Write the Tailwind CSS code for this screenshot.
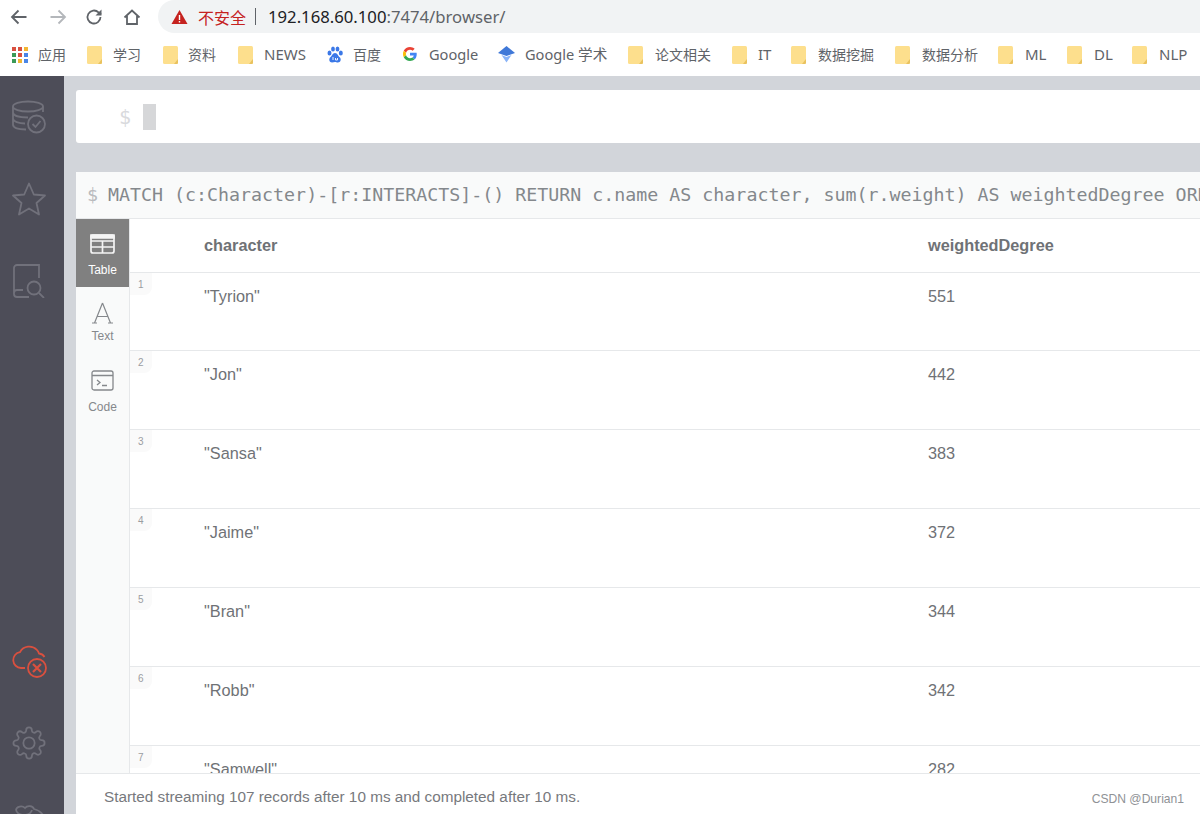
<!DOCTYPE html>
<html>
<head>
  <meta charset="utf-8" />
  <title>Neo4j Browser</title>
  <script src="https://cdn.jsdelivr.net/npm/@tailwindcss/browser@4"></script>
</head>
<body class="relative h-[814px] w-[1200px] overflow-hidden bg-white font-['Liberation_Sans',sans-serif]">

  <!-- browser toolbar -->
  <header class="flex h-[33px] items-center bg-white">
    <div class="flex w-[158px] items-center pl-[10px]">
      <svg class="h-[18px] w-[18px] text-[#5f6368]" viewBox="0 0 18 18" fill="none" stroke="currentColor" stroke-width="1.8"><path d="M16.5 9H2M8.5 2.5 2 9l6.500 6.500"/></svg>
      <svg class="ml-[21px] h-[18px] w-[18px] text-[#b4b7bb]" viewBox="0 0 18 18" fill="none" stroke="currentColor" stroke-width="1.8"><path d="M1.500 9H16M9.500 2.500 16 9l-6.500 6.500"/></svg>
      <svg class="ml-[18px] h-[18px] w-[18px] text-[#5f6368]" viewBox="0 0 18 18" fill="none" stroke="currentColor" stroke-width="1.8"><path d="M15.500 9a6.500 6.500 0 1 1-2-4.700L16 6.500"/><path d="M16.500 1.500v6h-6" fill="currentColor" stroke="none"/></svg>
      <svg class="ml-[20px] h-[18px] w-[18px] text-[#5f6368]" viewBox="0 0 18 18" fill="none" stroke="currentColor" stroke-width="1.8"><path d="M1.500 9.500 9 2.500l7.500 7M4 8v8h10V8"/></svg>
    </div>
    <div class="flex h-[33px] flex-1 items-center rounded-l-full bg-[#f1f3f4] pl-[13px]">
      <svg class="h-[16px] w-[17px]" viewBox="0 0 17 16"><path d="M8.500 1 16.500 15H.5z" fill="#c5221f"/><path d="M7.800 6h1.400v5H7.800zM7.800 12h1.400v1.500H7.800z" fill="#fff"/></svg>
      <span class="ml-[10px] font-['Noto_Sans_CJK_SC',sans-serif] text-[16px] text-[#c5221f]">不安全</span>
      <span class="ml-[9px] h-[17px] w-px bg-[#5f6368]"></span>
      <span class="ml-[12px] font-['Noto_Sans',sans-serif] text-[16.700px] text-[#202124]">192.168.60.100<span class="text-[#5f6368]">:7474/browser/</span></span>
    </div>
  </header>

  <!-- bookmarks bar -->
  <nav class="flex h-[43px] items-center bg-white pl-[12px] font-['Noto_Sans','Noto_Sans_CJK_SC',sans-serif] text-[14px] text-[#5f6368]">
    <div class="flex w-[75px] shrink-0 items-center gap-[10px]">
      <svg class="h-4 w-4" viewBox="0 0 16 16">
        <rect x="0" y="0" width="4" height="4" fill="#d9503f"/><rect x="6" y="0" width="4" height="4" fill="#d9503f"/><rect x="12" y="0" width="4" height="4" fill="#f2b632"/>
        <rect x="0" y="6" width="4" height="4" fill="#3b9a57"/><rect x="6" y="6" width="4" height="4" fill="#d9503f"/><rect x="12" y="6" width="4" height="4" fill="#4a86e8"/>
        <rect x="0" y="12" width="4" height="4" fill="#3b9a57"/><rect x="6" y="12" width="4" height="4" fill="#f2b632"/><rect x="12" y="12" width="4" height="4" fill="#4a86e8"/>
      </svg>
      <span>应用</span>
    </div>
    <div class="flex w-[76px] shrink-0 items-center gap-[11px]">
      <svg class="h-[18px] w-[15px]" viewBox="0 0 15 18"><rect width="15" height="18" rx="1.500" fill="#fddf8d"/><path d="M15 13v3.500a1.500 1.500 0 0 1-1.500 1.500H11z" fill="#e9c25e"/></svg>
      <span>学习</span>
    </div>
    <div class="flex w-[75px] shrink-0 items-center gap-[10px]">
      <svg class="h-[18px] w-[15px]" viewBox="0 0 15 18"><rect width="15" height="18" rx="1.500" fill="#fddf8d"/><path d="M15 13v3.500a1.500 1.500 0 0 1-1.500 1.500H11z" fill="#e9c25e"/></svg>
      <span>资料</span>
    </div>
    <div class="flex w-[89px] shrink-0 items-center gap-[11px]">
      <svg class="h-[18px] w-[15px]" viewBox="0 0 15 18"><rect width="15" height="18" rx="1.500" fill="#fddf8d"/><path d="M15 13v3.500a1.500 1.500 0 0 1-1.500 1.500H11z" fill="#e9c25e"/></svg>
      <span class="text-[15px]">NEWS</span>
    </div>
    <div class="flex w-[76px] shrink-0 items-center gap-[10px]">
      <svg class="h-[17px] w-4" viewBox="0 0 16 17" fill="#3b78e7"><ellipse cx="2.500" cy="7" rx="2" ry="2.600"/><ellipse cx="6" cy="3" rx="1.900" ry="2.600"/><ellipse cx="10.500" cy="3" rx="1.900" ry="2.600"/><ellipse cx="13.800" cy="7" rx="2" ry="2.600"/><path d="M8 7c2.500 0 3 3 5 4.500 1.500 2 .5 5-2 5-1.500 0-2-.5-3-.5s-2 .5-3 .5c-2.500 0-3.500-3-2-5C5 10 5.500 7 8 7z"/><path d="M6 11v3M8.500 12v2h2v-2" fill="none" stroke="#fff" stroke-width=".9"/></svg>
      <span>百度</span>
    </div>
    <div class="flex w-[95px] shrink-0 items-center gap-[12px]">
      <svg class="h-[14px] w-[14px]" viewBox="0 0 48 48"><path fill="#ea4335" d="M24 9.500c3.500 0 6.700 1.300 9.200 3.400l6.800-6.800C35.800 2.400 30.300 0 24 0 14.600 0 6.500 5.400 2.600 13.200l8 6.200C12.400 13.600 17.700 9.500 24 9.500z"/><path fill="#4285f4" d="M47 24.500c0-1.600-.2-3.200-.5-4.500H24v9h12.900c-.6 3-2.200 5.400-4.700 7.100l7.700 6C44.400 38 47 31.800 47 24.500z"/><path fill="#fbbc05" d="M10.600 28.600c-.5-1.400-.7-3-.7-4.600s.3-3.200.7-4.600l-8-6.200C.9 16.500 0 20.100 0 24s.9 7.500 2.600 10.800z"/><path fill="#34a853" d="M24 48c6.500 0 11.900-2.100 15.900-5.800l-7.700-6c-2.200 1.500-4.900 2.300-8.200 2.300-6.300 0-11.600-4.100-13.400-9.900l-8 6.200C6.500 42.600 14.600 48 24 48z"/></svg>
      <span class="text-[14.600px]">Google</span>
    </div>
    <div class="flex w-[130px] shrink-0 items-center gap-[10px]">
      <svg class="h-[17px] w-[17px]" viewBox="0 0 17 17"><path d="M8.500 0 17 7 8.500 10 0 7z" fill="#3f78d8"/><path d="M3.500 9 8.500 11 13.500 9 8.500 16.500z" fill="#8ab4f8"/></svg>
      <span class="text-[14.600px]">Google 学术</span>
    </div>
    <div class="flex w-[104px] shrink-0 items-center gap-[12px]">
      <svg class="h-[18px] w-[15px]" viewBox="0 0 15 18"><rect width="15" height="18" rx="1.500" fill="#fddf8d"/><path d="M15 13v3.500a1.500 1.500 0 0 1-1.500 1.500H11z" fill="#e9c25e"/></svg>
      <span>论文相关</span>
    </div>
    <div class="flex w-[59px] shrink-0 items-center gap-[11px]">
      <svg class="h-[18px] w-[15px]" viewBox="0 0 15 18"><rect width="15" height="18" rx="1.500" fill="#fddf8d"/><path d="M15 13v3.500a1.500 1.500 0 0 1-1.500 1.500H11z" fill="#e9c25e"/></svg>
      <span class="text-[15px]">IT</span>
    </div>
    <div class="flex w-[104px] shrink-0 items-center gap-[12px]">
      <svg class="h-[18px] w-[15px]" viewBox="0 0 15 18"><rect width="15" height="18" rx="1.500" fill="#fddf8d"/><path d="M15 13v3.500a1.500 1.500 0 0 1-1.500 1.500H11z" fill="#e9c25e"/></svg>
      <span>数据挖掘</span>
    </div>
    <div class="flex w-[103px] shrink-0 items-center gap-[12px]">
      <svg class="h-[18px] w-[15px]" viewBox="0 0 15 18"><rect width="15" height="18" rx="1.500" fill="#fddf8d"/><path d="M15 13v3.500a1.500 1.500 0 0 1-1.500 1.500H11z" fill="#e9c25e"/></svg>
      <span>数据分析</span>
    </div>
    <div class="flex w-[69px] shrink-0 items-center gap-[12px]">
      <svg class="h-[18px] w-[15px]" viewBox="0 0 15 18"><rect width="15" height="18" rx="1.500" fill="#fddf8d"/><path d="M15 13v3.500a1.500 1.500 0 0 1-1.500 1.500H11z" fill="#e9c25e"/></svg>
      <span class="text-[15px]">ML</span>
    </div>
    <div class="flex w-[65px] shrink-0 items-center gap-[12px]">
      <svg class="h-[18px] w-[15px]" viewBox="0 0 15 18"><rect width="15" height="18" rx="1.500" fill="#fddf8d"/><path d="M15 13v3.500a1.500 1.500 0 0 1-1.500 1.500H11z" fill="#e9c25e"/></svg>
      <span class="text-[15px]">DL</span>
    </div>
    <div class="flex shrink-0 items-center gap-[12px]">
      <svg class="h-[18px] w-[15px]" viewBox="0 0 15 18"><rect width="15" height="18" rx="1.500" fill="#fddf8d"/><path d="M15 13v3.500a1.500 1.500 0 0 1-1.500 1.500H11z" fill="#e9c25e"/></svg>
      <span class="text-[15px]">NLP</span>
    </div>
  </nav>

  <div class="flex h-[738px] overflow-hidden">
    <!-- neo4j sidebar -->
    <aside class="flex w-[64px] shrink-0 flex-col items-start gap-[48px] overflow-hidden bg-[#4d4d58] pl-[12px] pt-[24px] text-[#71717b]">
      <svg class="h-[34px] w-[34px] shrink-0" viewBox="0 0 34 34" fill="none" stroke="currentColor" stroke-width="1.800">
        <ellipse cx="16" cy="6.500" rx="15" ry="5"/>
        <path d="M1 6.500v18c0 3 5 5 13 5M1 12.500c0 3 6 5 15 5M1 18.500c0 3 6 5 12 5M31 6.500V12"/>
        <circle cx="24.500" cy="24" r="8.500"/>
        <path d="m20.500 24 3 3 5-6"/>
      </svg>
      <svg class="h-[34px] w-[34px] shrink-0" viewBox="0 0 34 34" fill="none" stroke="currentColor" stroke-width="1.800" stroke-linejoin="round">
        <path d="M17 1.500 21.800 12.500 33 13.500 24.500 21 27 32.500 17 26.500 7 32.500 9.500 21 1 13.500 12.200 12.500z"/>
      </svg>
      <svg class="h-[34px] w-[34px] shrink-0" viewBox="0 0 34 34" fill="none" stroke="currentColor" stroke-width="1.800">
        <path d="M27 14V1H5a3 3 0 0 0-3 3v26a3 3 0 0 0 3 3h12M2 29a3 3 0 0 1 3-3h6"/>
        <circle cx="22" cy="24" r="6.500"/>
        <path d="m27 29 5 5"/>
      </svg>
      <svg class="mt-[298px] h-[34px] w-[35px] shrink-0 text-[#d9503f]" viewBox="0 0 35 34" fill="none" stroke="currentColor" stroke-width="1.800">
        <path d="M13 24H9a8 8 0 0 1-1-15.900A10.500 10.500 0 0 1 25 6c1 1.200 1.500 2 2 3.500 2.500.3 4.500 1.500 5.500 3.500"/>
        <circle cx="25" cy="24" r="9"/>
        <path d="m21 20 8 8m0-8-8 8" stroke-width="2.200"/>
      </svg>
      <svg class="h-[34px] w-[34px] shrink-0" viewBox="0 0 24 24" fill="none" stroke="currentColor" stroke-width="1.250" stroke-linejoin="round">
        <circle cx="12" cy="12" r="4"/>
        <path d="M19.400 15a1.650 1.650 0 0 0 .33 1.820l.06.06a2 2 0 0 1 0 2.830 2 2 0 0 1-2.830 0l-.06-.06a1.650 1.650 0 0 0-1.820-.33 1.650 1.650 0 0 0-1 1.510V21a2 2 0 0 1-2 2 2 2 0 0 1-2-2v-.09A1.650 1.650 0 0 0 9 19.400a1.650 1.650 0 0 0-1.820.33l-.06.06a2 2 0 0 1-2.830 0 2 2 0 0 1 0-2.830l.06-.06a1.650 1.650 0 0 0 .33-1.820 1.650 1.650 0 0 0-1.510-1H3a2 2 0 0 1-2-2 2 2 0 0 1 2-2h.09A1.650 1.650 0 0 0 4.600 9a1.650 1.650 0 0 0-.33-1.820l-.06-.06a2 2 0 0 1 0-2.830 2 2 0 0 1 2.830 0l.06.06a1.650 1.650 0 0 0 1.820.33H9a1.650 1.650 0 0 0 1-1.510V3a2 2 0 0 1 2-2 2 2 0 0 1 2 2v.09a1.650 1.650 0 0 0 1 1.510 1.650 1.650 0 0 0 1.820-.33l.06-.06a2 2 0 0 1 2.830 0 2 2 0 0 1 0 2.830l-.06.06a1.650 1.650 0 0 0-.33 1.820V9a1.650 1.650 0 0 0 1.510 1H21a2 2 0 0 1 2 2 2 2 0 0 1-2 2h-.09a1.650 1.650 0 0 0-1.510 1z"/>
      </svg>
      <svg class="-mt-[4px] h-[34px] w-[34px] shrink-0" viewBox="0 0 34 34" fill="none" stroke="currentColor" stroke-width="1.800">
        <path d="M4 6a5 4 0 0 1 9-2 5 4 0 0 1 9 1c4 1 7 3 9 6M4 6c1 3 4 5 8 5s7-2 8-5"/>
      </svg>
    </aside>

    <main class="flex flex-1 flex-col bg-[#d2d5da] pl-[12px] pt-[14px]">
      <!-- editor -->
      <div class="flex h-[53px] shrink-0 items-center rounded-l-[3px] bg-white pl-[43px] font-['DejaVu_Sans_Mono',monospace] text-[20px] text-[#d9dadd]">
        <span>$</span>
        <span class="ml-[12px] h-[26px] w-[13px] bg-[#d6d7d9]"></span>
      </div>

      <!-- result frame -->
      <section class="mt-[29px] flex min-h-0 flex-1 flex-col overflow-hidden bg-white">
        <div class="flex h-[47px] shrink-0 items-center overflow-hidden whitespace-nowrap border-b border-[#e6e8ea] bg-[#f9fafa] pl-[11px] font-['DejaVu_Sans_Mono',monospace] text-[18.300px] text-[#84888c]">
          <span class="mr-[10px] text-[#b9bbbe]">$</span>MATCH (c:Character)-[r:INTERACTS]-() RETURN c.name AS character, sum(r.weight) AS weightedDegree ORDER BY weightedDegree DESC
        </div>

        <div class="flex min-h-0 flex-1">
          <!-- view tabs -->
          <div class="flex w-[53px] shrink-0 flex-col bg-[#f9fafa] text-[12px] text-[#85888c]">
            <div class="flex h-[68px] flex-col items-center bg-[#808080] pt-[15px] text-white">
              <svg class="h-[20px] w-[25px]" viewBox="0 0 25 20" fill="none" stroke="#f4f4f4" stroke-width="1.700"><rect x="1" y="1" width="23" height="18" rx="2"/><path d="M1 7h23M1 13h23M12.500 7v12"/><path d="M1 1h23v3H1z" fill="#f4f4f4"/></svg>
              <span class="mt-[9px] leading-[14px]">Table</span>
            </div>
            <div class="flex h-[68px] flex-col items-center pt-[15px]">
              <svg class="h-[22px] w-[21px]" viewBox="0 0 21 22" fill="none" stroke="#85888c" stroke-width="1.200"><path d="M10.500 1 2.500 21M10.500 1l8 20M5 14.500h11M0 21h5M16 21h5"/></svg>
              <span class="mt-[5px] leading-[14px]">Text</span>
            </div>
            <div class="flex h-[70px] flex-col items-center pt-[15px]">
              <svg class="h-[21px] w-[23px]" viewBox="0 0 23 21" fill="none" stroke="#85888c" stroke-width="1.300"><rect x="1" y="1" width="21" height="19" rx="2"/><path d="M1 5.500h21M6 10l3 2.500L6 15M11 15.500h5"/></svg>
              <span class="mt-[9px] leading-[14px]">Code</span>
            </div>
          </div>

          <!-- records -->
          <div class="min-w-0 flex-1 overflow-hidden border-l border-[#e6e8ea] text-[16.300px] leading-[22px] text-[#6f7276]">
            <div class="grid h-[53px] grid-cols-[74px_724px_1fr] items-center pb-[2px] font-bold">
              <span></span><span>character</span><span>weightedDegree</span>
            </div>
            <div class="grid h-[78px] grid-cols-[74px_724px_1fr] border-t border-[#e6e8ea]">
              <span class="h-[22px] w-[22px] rounded-br-[8px] bg-[#fafafa] pl-[8px] pt-[2px] text-[10px] leading-[20px] text-[#9a9da1]">1</span>
              <span class="pt-[12px]">"Tyrion"</span><span class="pt-[12px]">551</span>
            </div>
            <div class="grid h-[79px] grid-cols-[74px_724px_1fr] border-t border-[#e6e8ea]">
              <span class="h-[22px] w-[22px] rounded-br-[8px] bg-[#fafafa] pl-[8px] pt-[2px] text-[10px] leading-[20px] text-[#9a9da1]">2</span>
              <span class="pt-[12px]">"Jon"</span><span class="pt-[12px]">442</span>
            </div>
            <div class="grid h-[79px] grid-cols-[74px_724px_1fr] border-t border-[#e6e8ea]">
              <span class="h-[22px] w-[22px] rounded-br-[8px] bg-[#fafafa] pl-[8px] pt-[2px] text-[10px] leading-[20px] text-[#9a9da1]">3</span>
              <span class="pt-[12px]">"Sansa"</span><span class="pt-[12px]">383</span>
            </div>
            <div class="grid h-[79px] grid-cols-[74px_724px_1fr] border-t border-[#e6e8ea]">
              <span class="h-[22px] w-[22px] rounded-br-[8px] bg-[#fafafa] pl-[8px] pt-[2px] text-[10px] leading-[20px] text-[#9a9da1]">4</span>
              <span class="pt-[12px]">"Jaime"</span><span class="pt-[12px]">372</span>
            </div>
            <div class="grid h-[79px] grid-cols-[74px_724px_1fr] border-t border-[#e6e8ea]">
              <span class="h-[22px] w-[22px] rounded-br-[8px] bg-[#fafafa] pl-[8px] pt-[2px] text-[10px] leading-[20px] text-[#9a9da1]">5</span>
              <span class="pt-[12px]">"Bran"</span><span class="pt-[12px]">344</span>
            </div>
            <div class="grid h-[79px] grid-cols-[74px_724px_1fr] border-t border-[#e6e8ea]">
              <span class="h-[22px] w-[22px] rounded-br-[8px] bg-[#fafafa] pl-[8px] pt-[2px] text-[10px] leading-[20px] text-[#9a9da1]">6</span>
              <span class="pt-[12px]">"Robb"</span><span class="pt-[12px]">342</span>
            </div>
            <div class="grid h-[79px] grid-cols-[74px_724px_1fr] border-t border-[#e6e8ea]">
              <span class="h-[22px] w-[22px] rounded-br-[8px] bg-[#fafafa] pl-[8px] pt-[2px] text-[10px] leading-[20px] text-[#9a9da1]">7</span>
              <span class="pt-[12px]">"Samwell"</span><span class="pt-[12px]">282</span>
            </div>
          </div>
        </div>

        <footer class="flex h-[41px] shrink-0 items-center border-t border-[#e6e8ea] bg-white pl-[28px] pt-[6px] text-[15.300px] text-[#77797d]">
          Started streaming 107 records after 10 ms and completed after 10 ms.
        </footer>
      </section>
    </main>
  </div>

  <!-- watermark -->
  <span class="absolute bottom-[7px] right-[16px] text-[12.100px] leading-[16px] text-[#8f9296]">CSDN @Durian1</span>
</body>
</html>
